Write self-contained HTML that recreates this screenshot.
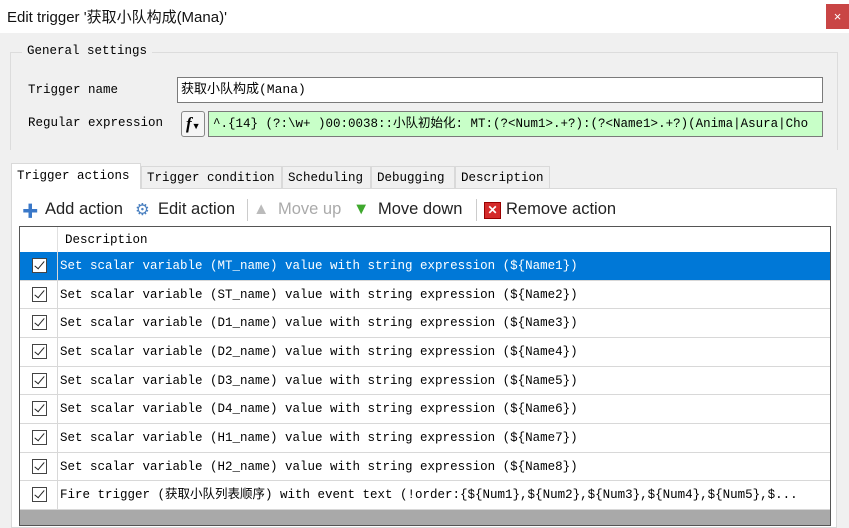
<!DOCTYPE html>
<html><head><meta charset="utf-8"><style>
*{box-sizing:border-box;margin:0;padding:0}
body{width:849px;height:524px;overflow:hidden;background:#f0f0f0;font-family:"Liberation Mono","Noto Sans CJK SC",monospace;font-size:12.5px;color:#000;position:relative}
.abs{position:absolute}
.mono{font-family:"Liberation Mono","Noto Sans CJK SC",monospace;font-size:12.5px;white-space:nowrap;line-height:15px}
.sans{font-family:"Liberation Sans","Noto Sans CJK SC",sans-serif;white-space:nowrap}
.row{position:absolute;left:0;width:810px;border-bottom:1px solid #d8d8d8;background:#fff}
.row .cb{position:absolute;left:12px;top:6px;width:15px;height:15px;border:1px solid #444;background:#fff}
.row .cb:after{content:"";position:absolute;left:4px;top:0px;width:4px;height:9px;border:solid #222;border-width:0 1.5px 1.5px 0;transform:rotate(40deg)}
.row .sep{position:absolute;left:37px;top:0;width:1px;height:100%;background:#d8d8d8}
.row .t{position:absolute;left:40px;top:7px}
.sel{background:#0078d7;color:#fff}
.tab{position:absolute;top:166px;height:22px;border:1px solid #d9d9d9;border-bottom:none;background:#f0f0f0;padding:4px 0 0 5px}
.tb{position:absolute;top:200px;font-size:16.5px;color:#222}
</style></head><body>
<div class="abs" style="left:0;top:0;width:849px;height:33px;background:#fff"></div>
<div class="abs sans" style="left:7px;top:6px;font-size:15px;color:#111">Edit trigger '获取小队构成(Mana)'</div>
<div class="abs" style="left:826px;top:4px;width:23px;height:25px;background:#c94545;color:#fff;font-family:'Liberation Sans';font-size:13px;text-align:center;line-height:25px">×</div>

<div class="abs" style="left:10px;top:52px;width:828px;height:98px;border:1px solid #dcdcdc;border-bottom:none"></div>
<div class="abs mono" style="left:22px;top:44px;background:#f0f0f0;padding:0 5px">General settings</div>
<div class="abs mono" style="left:28px;top:83px">Trigger name</div>
<div class="abs mono" style="left:28px;top:116px">Regular expression</div>
<div class="abs mono" style="left:177px;top:77px;width:646px;height:26px;border:1px solid #7a7a7a;background:#fff;padding:4px 3px;font-size:13px">获取小队构成(Mana)</div>
<div class="abs" style="left:181px;top:111px;width:24px;height:26px;border:1px solid #888;border-radius:3px;background:#f5f5f5;font-family:'Liberation Serif';font-style:italic;font-weight:bold;font-size:17px;padding-left:4px;line-height:23px">f<span style="font-size:9px;font-style:normal">▼</span></div>
<div class="abs mono" style="left:208px;top:111px;width:615px;height:26px;border:1px solid #7a7a7a;background:#c8ffc8;padding:5px 4px;overflow:hidden;font-size:12.5px">^.{14} (?:\w+ )00:0038::小队初始化: MT:(?&lt;Num1&gt;.+?):(?&lt;Name1&gt;.+?)(Anima|Asura|Cho</div>

<div class="abs" style="left:11px;top:188px;width:826px;height:340px;border:1px solid #d9d9d9;background:#fff"></div>
<div class="tab mono" style="left:11px;top:163px;width:130px;height:26px;background:#fff;padding-top:5px">Trigger actions</div>
<div class="tab mono" style="left:141px;width:141px">Trigger condition</div>
<div class="tab mono" style="left:282px;width:89px">Scheduling</div>
<div class="tab mono" style="left:371px;width:84px">Debugging</div>
<div class="tab mono" style="left:455px;width:95px">Description</div>

<div class="tb sans" style="left:22px;color:#3a78c8;font-weight:bold;top:198px">✚</div>
<div class="tb sans" style="left:45px">Add action</div>
<div class="tb sans" style="left:135px;color:#4a80c0">⚙</div>
<div class="tb sans" style="left:158px">Edit action</div>
<div class="abs" style="left:247px;top:199px;width:1px;height:22px;background:#ccc"></div>
<div class="tb sans" style="left:253px;color:#bbb">▲</div>
<div class="tb sans" style="left:278px;color:#aaa">Move up</div>
<div class="tb sans" style="left:353px;color:#3fa82d">▼</div>
<div class="tb sans" style="left:378px">Move down</div>
<div class="abs" style="left:476px;top:199px;width:1px;height:22px;background:#ccc"></div>
<div class="abs" style="left:484px;top:202px;width:17px;height:17px;background:#d42b2b;color:#fff;font-family:'Liberation Sans';font-size:12px;font-weight:bold;text-align:center;line-height:15px;border:1px solid #900">✕</div>
<div class="tb sans" style="left:506px">Remove action</div>

<div class="abs" style="left:19px;top:226px;width:812px;height:300px;border:1px solid #555;background:#a9a9a9;overflow:hidden">
<div class="abs" style="left:0;top:0;width:810px;height:26px;background:#fff;border-bottom:1px solid #d8d8d8"></div>
<div class="abs" style="left:37px;top:0;width:1px;height:26px;background:#e0e0e0"></div>
<div class="abs mono" style="left:45px;top:6px">Description</div>
<div class="row sel" style="top:25px;height:29px"><div class="cb"></div><div class="sep"></div><div class="t mono">Set scalar variable (MT_name) value with string expression (${Name1})</div></div>
<div class="row" style="top:54px;height:28px"><div class="cb"></div><div class="sep"></div><div class="t mono">Set scalar variable (ST_name) value with string expression (${Name2})</div></div>
<div class="row" style="top:82px;height:29px"><div class="cb"></div><div class="sep"></div><div class="t mono">Set scalar variable (D1_name) value with string expression (${Name3})</div></div>
<div class="row" style="top:111px;height:29px"><div class="cb"></div><div class="sep"></div><div class="t mono">Set scalar variable (D2_name) value with string expression (${Name4})</div></div>
<div class="row" style="top:140px;height:28px"><div class="cb"></div><div class="sep"></div><div class="t mono">Set scalar variable (D3_name) value with string expression (${Name5})</div></div>
<div class="row" style="top:168px;height:29px"><div class="cb"></div><div class="sep"></div><div class="t mono">Set scalar variable (D4_name) value with string expression (${Name6})</div></div>
<div class="row" style="top:197px;height:29px"><div class="cb"></div><div class="sep"></div><div class="t mono">Set scalar variable (H1_name) value with string expression (${Name7})</div></div>
<div class="row" style="top:226px;height:28px"><div class="cb"></div><div class="sep"></div><div class="t mono">Set scalar variable (H2_name) value with string expression (${Name8})</div></div>
<div class="row" style="top:254px;height:29px"><div class="cb"></div><div class="sep"></div><div class="t mono">Fire trigger (获取小队列表顺序) with event text (!order:{${Num1},${Num2},${Num3},${Num4},${Num5},$...</div></div>
</div>
</body></html>
